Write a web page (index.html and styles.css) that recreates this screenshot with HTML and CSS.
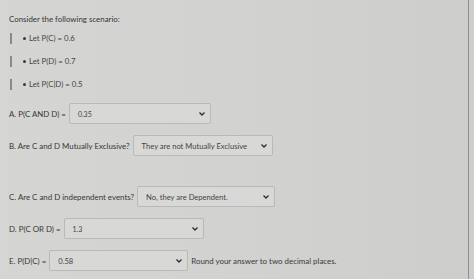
FILE: index.html
```html
<!DOCTYPE html>
<html>
<head>
<meta charset="utf-8">
<link rel="stylesheet" href="styles.css">
</head>
<body>
<div class="page">
  <p class="intro">Consider the following scenario:</p>
  <ul class="facts">
    <li class="fact"><span class="bar"></span><span class="dot"></span><span>Let P(C) = 0.6</span></li>
    <li class="fact"><span class="bar"></span><span class="dot"></span><span>Let P(D) = 0.7</span></li>
    <li class="fact"><span class="bar"></span><span class="dot"></span><span>Let P(C|D) = 0.5</span></li>
  </ul>
  <div class="q qa">
    <span class="label">A. P(C AND D) =</span>
    <div class="select w142"><span class="val">0.35</span><svg class="chev" width="6" height="4" viewBox="0 0 6 4"><path d="M0.5 0.5 L3 3 L5.5 0.5" fill="none" stroke="#2e2e2e" stroke-width="1.3"/></svg></div>
  </div>
  <div class="q qb">
    <span class="label">B. Are C and D Mutually Exclusive?</span>
    <div class="select w140"><span class="val sm">They are not Mutually Exclusive</span><svg class="chev" width="6" height="4" viewBox="0 0 6 4"><path d="M0.5 0.5 L3 3 L5.5 0.5" fill="none" stroke="#2e2e2e" stroke-width="1.3"/></svg></div>
  </div>
  <div class="q qc">
    <span class="label">C. Are C and D independent events?</span>
    <div class="select w138"><span class="val sm">No, they are Dependent.</span><svg class="chev" width="6" height="4" viewBox="0 0 6 4"><path d="M0.5 0.5 L3 3 L5.5 0.5" fill="none" stroke="#2e2e2e" stroke-width="1.3"/></svg></div>
  </div>
  <div class="q qd">
    <span class="label">D. P(C OR D) =</span>
    <div class="select w140"><span class="val">1.3</span><svg class="chev" width="6" height="4" viewBox="0 0 6 4"><path d="M0.5 0.5 L3 3 L5.5 0.5" fill="none" stroke="#2e2e2e" stroke-width="1.3"/></svg></div>
  </div>
  <div class="q qe">
    <span class="label">E. P(D|C) =</span>
    <div class="select w139"><span class="val sm">0.58</span><svg class="chev" width="6" height="4" viewBox="0 0 6 4"><path d="M0.5 0.5 L3 3 L5.5 0.5" fill="none" stroke="#2e2e2e" stroke-width="1.3"/></svg></div>
    <span class="note">Round your answer to two decimal places.</span>
  </div>
</div>
</body>
</html>
```
FILE: styles.css
```css
html, body {
  margin: 0;
  padding: 0;
}
body {
  width: 474px;
  height: 279px;
  overflow: hidden;
  background: linear-gradient(90deg, #d5d5d3 0%, #d2d2d0 50%, #cdcdcb 100%);
  font-family: Lato, "Open Sans", sans-serif;
  color: #363636;
}
.page {
  width: 469px;
  height: 279px;
  border-right: 1px solid #8e8e8c;
  padding-left: 9px;
  box-sizing: border-box;
  padding-top: 13px;
}
.intro {
  margin: 0;
  font-size: 7.9px;
  line-height: 12px;
}
.facts {
  list-style: none;
  margin: 7px 0 0 0;
  padding: 0;
  display: flex;
  flex-direction: column;
  gap: 11px;
}
.fact {
  display: flex;
  align-items: center;
  height: 12px;
  font-size: 7.8px;
  color: #454545;
}
.bar {
  width: 2px;
  height: 11px;
  background: #8a8a88;
  margin-left: 1px;
  margin-right: 11px;
}
.dot {
  width: 3px;
  height: 3px;
  border-radius: 50%;
  background: #3a3a3a;
  margin-right: 3px;
}
.q {
  display: flex;
  align-items: center;
  gap: 3px;
  font-size: 7.9px;
}
.qa { margin-top: 13px; }
.qb { margin-top: 11px; }
.qc { margin-top: 30px; }
.qd { margin-top: 11px; }
.qe { margin-top: 11px; }
.select {
  height: 21px;
  box-sizing: border-box;
  border: 1px solid #b9b9b7;
  border-radius: 2px;
  background: #d8d8d6;
  display: flex;
  align-items: center;
  justify-content: space-between;
  padding: 0 5px 0 8px;
}
.w142 { width: 142px; }
.w140 { width: 140px; }
.w139 { width: 139px; }
.w138 { width: 138px; }
.val {
  font-size: 7px;
  color: #454545;
}
.val.sm {
  font-size: 7.6px;
  padding-left: 0;
}
.chev {
  display: block;
}
.note {
  color: #3a3a3a;
}
```
